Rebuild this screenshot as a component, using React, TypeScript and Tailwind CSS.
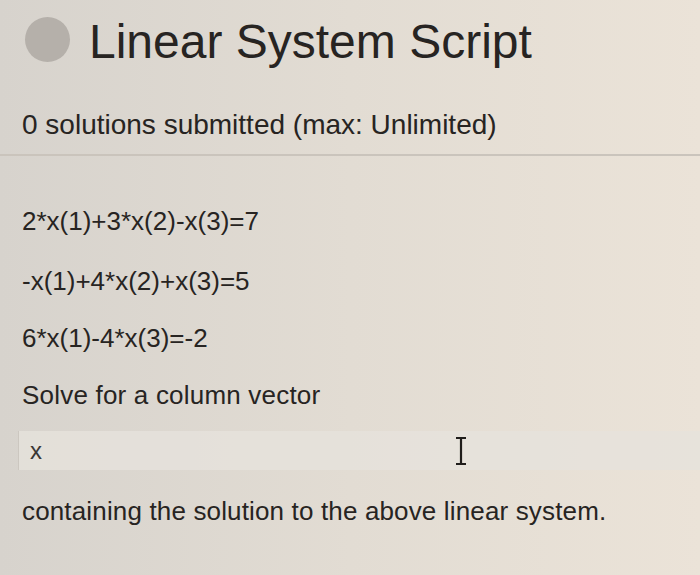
export default function App() {
  const equations = [
    { text: "2*x(1)+3*x(2)-x(3)=7", gap: "mt-[50px]" },
    { text: "-x(1)+4*x(2)+x(3)=5", gap: "mt-[30px]" },
    { text: "6*x(1)-4*x(3)=-2", gap: "mt-[27px]" },
  ];

  return (
    <div
      className="h-[575px] w-[700px] overflow-hidden bg-gradient-to-r from-[#d7d3cd] via-[#e2dcd3] to-[#ebe3d8] text-[#272422]"
      style={{ fontFamily: '"Liberation Sans", Arial, sans-serif' }}
    >
      {/* Header */}
      <div className="flex items-start pl-[25px] pt-[16px]">
        <div className="mt-[1px] h-[45px] w-[45px] shrink-0 rounded-full bg-[#b5b0aa]" />
        <h1 className="ml-[19px] text-[48px] leading-[52px]">Linear System Script</h1>
      </div>

      <p className="mt-[41px] pl-[22px] text-[28px] leading-[32px]">0 solutions submitted (max: Unlimited)</p>
      <div className="mt-[13px] h-[2px] bg-[#cac4bc]" />

      {/* Problem */}
      <div className="pl-[22px]">
        {equations.map((eq) => (
          <p key={eq.text} className={`${eq.gap} text-[26px] leading-[30px]`}>
            {eq.text}
          </p>
        ))}
        <p className="mt-[27px] text-[26px] leading-[30px] tracking-[0.2px]">Solve for a column vector</p>
      </div>

      <div className="ml-[18px] mt-[21px] flex h-[39px] items-center border-l border-[#ccc7c0] bg-[#e6e2dc]/80 pl-[11px]">
        <span className="text-[24px] leading-none text-[#3a3735]">x</span>
        <svg className="ml-[411px]" width="16" height="30" viewBox="0 0 16 30" fill="none">
          <path d="M8 2v26M3 2h10M3 28h10" stroke="#1f1d1b" strokeWidth="2.2" />
        </svg>
      </div>

      <p className="mt-[26px] pl-[22px] text-[26px] leading-[30px] tracking-[0.15px]">
        containing the solution to the above linear system.
      </p>
    </div>
  );
}
